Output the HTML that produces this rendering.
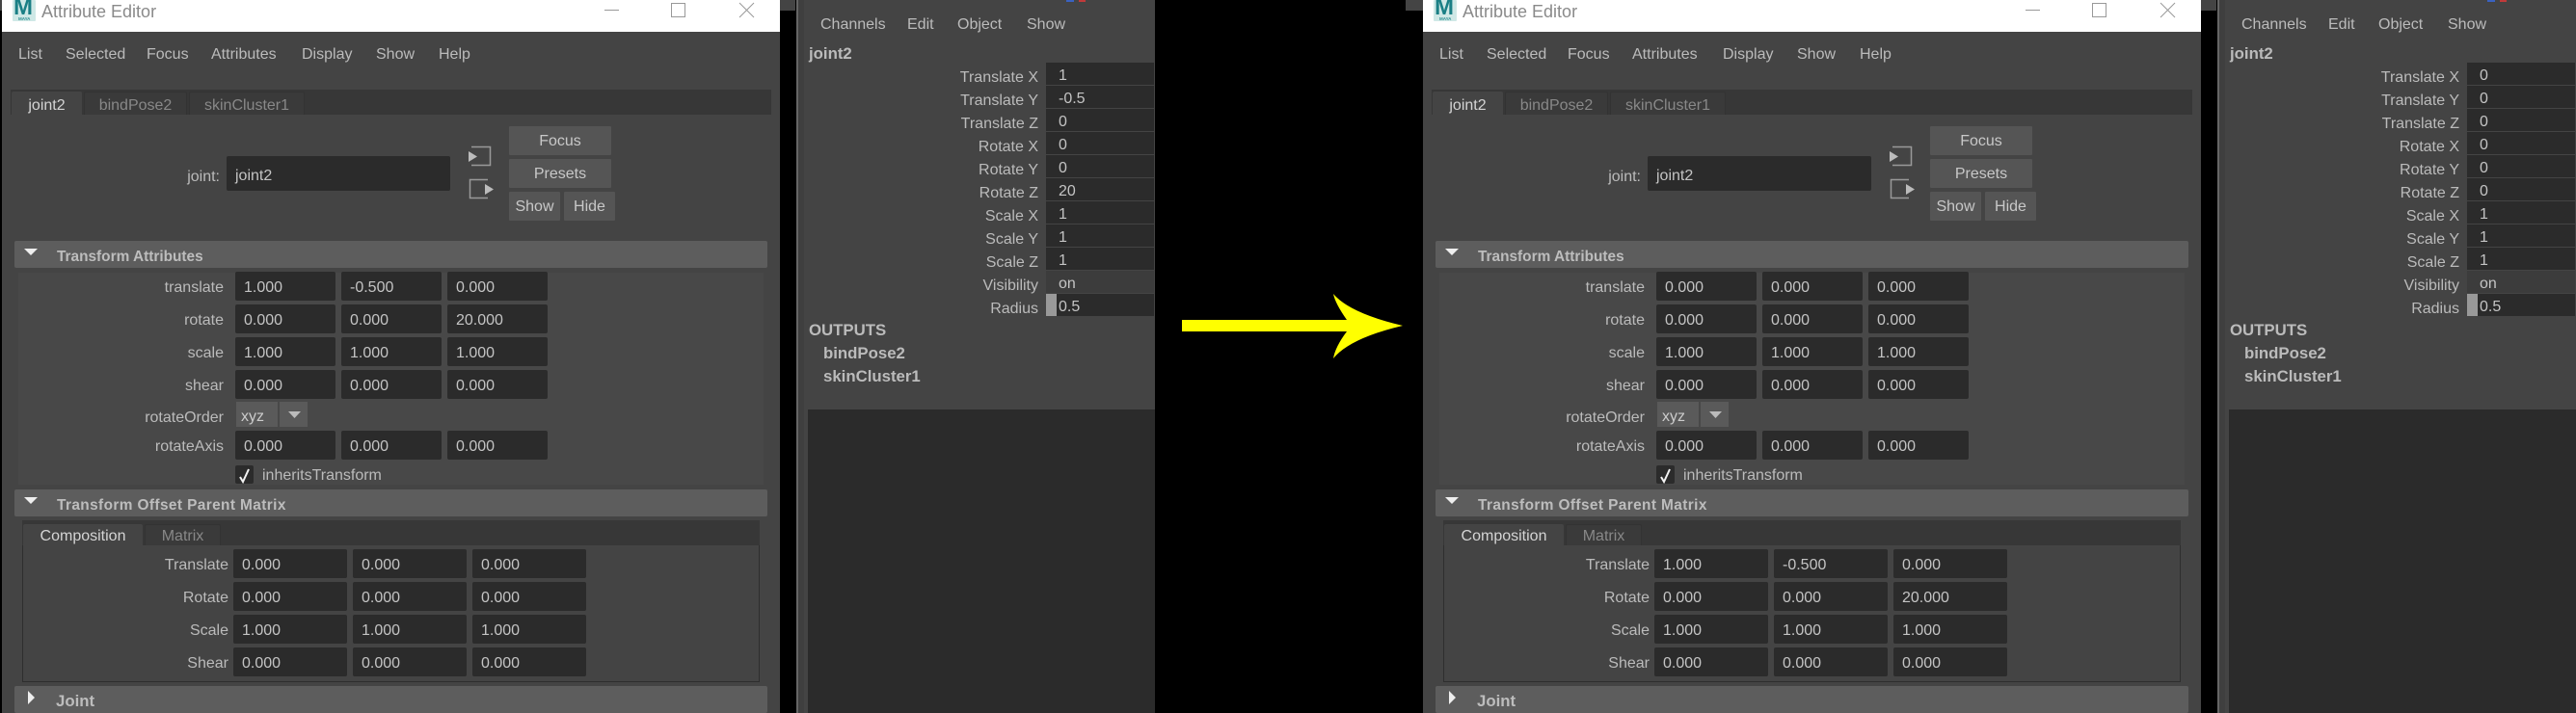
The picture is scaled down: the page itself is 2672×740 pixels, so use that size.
<!DOCTYPE html>
<html><head><meta charset="utf-8"><title>Attribute Editor</title>
<style>
html,body{margin:0;padding:0;background:#000;width:2672px;height:740px;overflow:hidden}
body{position:relative;font-family:"Liberation Sans",sans-serif;font-size:16px;color:#bbb}
div,span{box-sizing:border-box}
.a{position:absolute}
.w{position:absolute;top:0;width:840px;height:740px}
.t{position:absolute;line-height:20px;height:20px;white-space:nowrap;margin-top:2px}
.r{transform:translateX(-100%)}
.b{font-weight:bold;font-size:16.8px}
.sec{position:absolute;left:15px;width:781px;height:28px;background:#5d5d5d;border-radius:2px}
.sec .t{left:44px;top:6px;font-weight:bold;font-size:15.4px;color:#bdbdbd;margin-top:1px}
.f{position:absolute;height:30px;background:#2b2b2b;border-radius:2px;line-height:33px;padding-left:9px;color:#c4c4c4;width:104px}
.c1{left:244px}.c2{left:354px}.c3{left:464px}
.d1{left:242px;width:118px}.d2{left:366px;width:118px}.d3{left:490px;width:118px}
.btn{position:absolute;background:#555;height:30px;line-height:32px;text-align:center;color:#c8c8c8;border-radius:1px}
.tab{position:absolute;background:#3a3a3a;border:1px solid #333;border-bottom:0;border-radius:2px 2px 0 0;color:#888;text-align:center}
.on{background:#444;border-color:#444;color:#d4d4d4}
.cf{position:absolute;left:1085px;width:112px;height:23px;background:#2b2b2b;line-height:27px;padding-left:13px;color:#c4c4c4}
.ci{left:2559px;width:112px}
.logo{position:absolute;left:13px;top:0;width:24px;height:22px;background:#cfe8e6;border-radius:1px;overflow:hidden}
.logo .m{position:absolute;left:1px;top:-3px;font-size:24px;font-weight:bold;line-height:21px;color:#1a7f85}
.logo .y{position:absolute;left:6px;top:17px;font-size:4.5px;font-weight:bold;line-height:5px;color:#2f8f93}
</style></head><body>

<!-- backdrop strips -->
<div class="a" style="left:0;top:0;width:2px;height:11px;background:#444"></div>
<div class="a" style="left:809px;top:0;width:16px;height:11px;background:#444"></div>
<div class="a" style="left:1458px;top:0;width:18px;height:11px;background:#444"></div>
<div class="a" style="left:2283px;top:0;width:16px;height:11px;background:#444"></div>

<!-- LEFT ATTRIBUTE EDITOR -->
<div class="w" style="left:0">
<div class="a" style="left:2px;top:33px;width:807px;height:707px;background:#444"></div>
<div class="a" style="left:2px;top:0;width:807px;height:33px;background:#fff"></div>
<div class="logo"><span class="m">M</span><span class="y">MAYA</span></div>
<div class="t" style="left:43px;top:0;font-size:18px;color:#8a8a8a">Attribute Editor</div>
<svg class="a" style="left:620px;top:0" width="170" height="24" fill="none" stroke="#999" stroke-width="1"><path d="M7 10.5H22"/><rect x="76.5" y="3.5" width="14" height="14"/><path d="M147 3L162 18M162 3L147 18"/></svg>

<div class="t" style="left:19px;top:45px">List</div>
<div class="t" style="left:68px;top:45px">Selected</div>
<div class="t" style="left:152px;top:45px">Focus</div>
<div class="t" style="left:219px;top:45px">Attributes</div>
<div class="t" style="left:313px;top:45px">Display</div>
<div class="t" style="left:390px;top:45px">Show</div>
<div class="t" style="left:455px;top:45px">Help</div>

<div class="a" style="left:11px;top:93px;width:789px;height:26px;background:#373737"></div>
<div class="tab on" style="left:12px;top:95px;width:73px;height:24px;line-height:27px">joint2</div>
<div class="tab" style="left:87px;top:95px;width:107px;height:24px;line-height:27px">bindPose2</div>
<div class="tab" style="left:196px;top:95px;width:120px;height:24px;line-height:27px">skinCluster1</div>

<div class="t r" style="left:228px;top:172px">joint:</div>
<div class="f" style="left:235px;top:162px;width:232px;height:36px;line-height:41px;padding-left:9px">joint2</div>
<svg class="a" style="left:484px;top:150px" width="30" height="60"><path d="M5 2.5H24.500V21.500H5" fill="none" stroke="#999" stroke-width="1.500"/><path d="M2 7L11 12.500L2 18Z" fill="#bbb"/><path d="M22 36.500H3.500V55.500H22" fill="none" stroke="#999" stroke-width="1.500"/><path d="M19 41L28 46.500L19 52Z" fill="#bbb"/></svg>
<div class="btn" style="left:528px;top:131px;width:106px">Focus</div>
<div class="btn" style="left:528px;top:165px;width:106px">Presets</div>
<div class="btn" style="left:528px;top:199px;width:53px">Show</div>
<div class="btn" style="left:585px;top:199px;width:53px">Hide</div>

<div class="a" style="left:19px;top:283px;width:773px;height:220px;background:#484848"></div>
<div class="sec" style="top:250px"><svg class="a" style="left:10px;top:8px" width="16" height="8"><path d="M0 0H14L7 7Z" fill="#eee"/></svg><div class="t">Transform Attributes</div></div>

<div class="t r" style="left:232px;top:287px">translate</div>
<div class="f c1" style="top:282px">1.000</div><div class="f c2" style="top:282px">-0.500</div><div class="f c3" style="top:282px">0.000</div>
<div class="t r" style="left:232px;top:321px">rotate</div>
<div class="f c1" style="top:316px">0.000</div><div class="f c2" style="top:316px">0.000</div><div class="f c3" style="top:316px">20.000</div>
<div class="t r" style="left:232px;top:355px">scale</div>
<div class="f c1" style="top:350px">1.000</div><div class="f c2" style="top:350px">1.000</div><div class="f c3" style="top:350px">1.000</div>
<div class="t r" style="left:232px;top:389px">shear</div>
<div class="f c1" style="top:384px">0.000</div><div class="f c2" style="top:384px">0.000</div><div class="f c3" style="top:384px">0.000</div>
<div class="t r" style="left:232px;top:422px">rotateOrder</div>
<div class="a" style="left:245px;top:417px;width:43px;height:26px;background:#5a5a5a;line-height:32px;padding-left:5px;color:#ccc">xyz</div>
<div class="a" style="left:290px;top:417px;width:29px;height:26px;background:#5a5a5a"></div>
<svg class="a" style="left:298px;top:426px" width="16" height="9"><path d="M1 1H14L7.500 8Z" fill="#bbb"/></svg>
<div class="t r" style="left:232px;top:452px">rotateAxis</div>
<div class="f c1" style="top:447px">0.000</div><div class="f c2" style="top:447px">0.000</div><div class="f c3" style="top:447px">0.000</div>
<div class="a" style="left:244px;top:483px;width:19px;height:19px;background:#2b2b2b;border-radius:2px"></div>
<svg class="a" style="left:244px;top:483px" width="19" height="19"><path d="M5 12L8 17L14 4" fill="none" stroke="#f2f2f2" stroke-width="2"/></svg>
<div class="t" style="left:272px;top:482px">inheritsTransform</div>

<div class="sec" style="top:508px"><svg class="a" style="left:10px;top:8px" width="16" height="8"><path d="M0 0H14L7 7Z" fill="#eee"/></svg><div class="t" style="letter-spacing:.4px">Transform Offset Parent Matrix</div></div>

<div class="a" style="left:23px;top:540px;width:765px;height:168px;border:1px solid #2e2e2e;border-top:0"></div>
<div class="a" style="left:23px;top:540px;width:765px;height:26px;background:#373737"></div>
<div class="tab on" style="left:24px;top:544px;width:124px;height:22px;line-height:24px">Composition</div>
<div class="tab" style="left:150px;top:544px;width:79px;height:22px;line-height:24px">Matrix</div>

<div class="t r" style="left:237px;top:575px">Translate</div>
<div class="f d1" style="top:570px">0.000</div><div class="f d2" style="top:570px">0.000</div><div class="f d3" style="top:570px">0.000</div>
<div class="t r" style="left:237px;top:609px">Rotate</div>
<div class="f d1" style="top:604px">0.000</div><div class="f d2" style="top:604px">0.000</div><div class="f d3" style="top:604px">0.000</div>
<div class="t r" style="left:237px;top:643px">Scale</div>
<div class="f d1" style="top:638px">1.000</div><div class="f d2" style="top:638px">1.000</div><div class="f d3" style="top:638px">1.000</div>
<div class="t r" style="left:237px;top:677px">Shear</div>
<div class="f d1" style="top:672px">0.000</div><div class="f d2" style="top:672px">0.000</div><div class="f d3" style="top:672px">0.000</div>

<div class="sec" style="top:712px"><svg class="a" style="left:13px;top:5px" width="10" height="15"><path d="M1 0L8 7L1 14Z" fill="#eee"/></svg><div class="t" style="left:43px;top:5px;font-size:16.8px">Joint</div></div>
</div>

<!-- LEFT CHANNEL BOX -->
<div class="a" style="left:826px;top:0;width:2px;height:740px;background:#666"></div>
<div class="a" style="left:828px;top:0;width:370px;height:740px;background:#444"></div>
<div class="a" style="left:828px;top:0;width:6px;height:740px;background:#3f3f3f"></div>
<div class="a" style="left:1106px;top:0;width:8px;height:2px;background:#3a62c0"></div>
<div class="a" style="left:1119px;top:0;width:7px;height:2px;background:#c03a3a"></div>
<div class="t" style="left:851px;top:14px">Channels</div>
<div class="t" style="left:941px;top:14px">Edit</div>
<div class="t" style="left:993px;top:14px">Object</div>
<div class="t" style="left:1065px;top:14px">Show</div>
<div class="t b" style="left:839px;top:44px">joint2</div>
<div class="t r" style="left:1077px;top:69px">Translate X</div><div class="cf" style="top:65px">1</div>
<div class="t r" style="left:1077px;top:93px">Translate Y</div><div class="cf" style="top:89px">-0.5</div>
<div class="t r" style="left:1077px;top:117px">Translate Z</div><div class="cf" style="top:113px">0</div>
<div class="t r" style="left:1077px;top:141px">Rotate X</div><div class="cf" style="top:137px">0</div>
<div class="t r" style="left:1077px;top:165px">Rotate Y</div><div class="cf" style="top:161px">0</div>
<div class="t r" style="left:1077px;top:189px">Rotate Z</div><div class="cf" style="top:185px">20</div>
<div class="t r" style="left:1077px;top:213px">Scale X</div><div class="cf" style="top:209px">1</div>
<div class="t r" style="left:1077px;top:237px">Scale Y</div><div class="cf" style="top:233px">1</div>
<div class="t r" style="left:1077px;top:261px">Scale Z</div><div class="cf" style="top:257px">1</div>
<div class="t r" style="left:1077px;top:285px">Visibility</div><div class="cf" style="top:281px;background:#3c3c3c">on</div>
<div class="t r" style="left:1077px;top:309px">Radius</div><div class="cf" style="top:305px">0.5</div>
<div class="a" style="left:1085px;top:305px;width:11px;height:23px;background:#999"></div>
<div class="t b" style="left:839px;top:331px">OUTPUTS</div>
<div class="t b" style="left:854px;top:355px">bindPose2</div>
<div class="t b" style="left:854px;top:379px">skinCluster1</div>
<div class="a" style="left:838px;top:425px;width:360px;height:315px;background:#2b2b2b"></div>

<!-- ARROW -->
<svg class="a" style="left:1220px;top:300px" width="240" height="80"><path d="M6 32H177Q165 15 163 5Q180 25 235 38Q180 51 163 72Q165 60 177 44H6Z" fill="#ffff00"/></svg>

<!-- RIGHT ATTRIBUTE EDITOR -->
<div class="w" style="left:1474px">
<div class="a" style="left:2px;top:33px;width:807px;height:707px;background:#444"></div>
<div class="a" style="left:2px;top:0;width:807px;height:33px;background:#fff"></div>
<div class="logo"><span class="m">M</span><span class="y">MAYA</span></div>
<div class="t" style="left:43px;top:0;font-size:18px;color:#8a8a8a">Attribute Editor</div>
<svg class="a" style="left:620px;top:0" width="170" height="24" fill="none" stroke="#999" stroke-width="1"><path d="M7 10.5H22"/><rect x="76.5" y="3.5" width="14" height="14"/><path d="M147 3L162 18M162 3L147 18"/></svg>

<div class="t" style="left:19px;top:45px">List</div>
<div class="t" style="left:68px;top:45px">Selected</div>
<div class="t" style="left:152px;top:45px">Focus</div>
<div class="t" style="left:219px;top:45px">Attributes</div>
<div class="t" style="left:313px;top:45px">Display</div>
<div class="t" style="left:390px;top:45px">Show</div>
<div class="t" style="left:455px;top:45px">Help</div>

<div class="a" style="left:11px;top:93px;width:789px;height:26px;background:#373737"></div>
<div class="tab on" style="left:12px;top:95px;width:73px;height:24px;line-height:27px">joint2</div>
<div class="tab" style="left:87px;top:95px;width:107px;height:24px;line-height:27px">bindPose2</div>
<div class="tab" style="left:196px;top:95px;width:120px;height:24px;line-height:27px">skinCluster1</div>

<div class="t r" style="left:228px;top:172px">joint:</div>
<div class="f" style="left:235px;top:162px;width:232px;height:36px;line-height:41px;padding-left:9px">joint2</div>
<svg class="a" style="left:484px;top:150px" width="30" height="60"><path d="M5 2.5H24.500V21.500H5" fill="none" stroke="#999" stroke-width="1.500"/><path d="M2 7L11 12.500L2 18Z" fill="#bbb"/><path d="M22 36.500H3.500V55.500H22" fill="none" stroke="#999" stroke-width="1.500"/><path d="M19 41L28 46.500L19 52Z" fill="#bbb"/></svg>
<div class="btn" style="left:528px;top:131px;width:106px">Focus</div>
<div class="btn" style="left:528px;top:165px;width:106px">Presets</div>
<div class="btn" style="left:528px;top:199px;width:53px">Show</div>
<div class="btn" style="left:585px;top:199px;width:53px">Hide</div>

<div class="a" style="left:19px;top:283px;width:773px;height:220px;background:#484848"></div>
<div class="sec" style="top:250px"><svg class="a" style="left:10px;top:8px" width="16" height="8"><path d="M0 0H14L7 7Z" fill="#eee"/></svg><div class="t">Transform Attributes</div></div>

<div class="t r" style="left:232px;top:287px">translate</div>
<div class="f c1" style="top:282px">0.000</div><div class="f c2" style="top:282px">0.000</div><div class="f c3" style="top:282px">0.000</div>
<div class="t r" style="left:232px;top:321px">rotate</div>
<div class="f c1" style="top:316px">0.000</div><div class="f c2" style="top:316px">0.000</div><div class="f c3" style="top:316px">0.000</div>
<div class="t r" style="left:232px;top:355px">scale</div>
<div class="f c1" style="top:350px">1.000</div><div class="f c2" style="top:350px">1.000</div><div class="f c3" style="top:350px">1.000</div>
<div class="t r" style="left:232px;top:389px">shear</div>
<div class="f c1" style="top:384px">0.000</div><div class="f c2" style="top:384px">0.000</div><div class="f c3" style="top:384px">0.000</div>
<div class="t r" style="left:232px;top:422px">rotateOrder</div>
<div class="a" style="left:245px;top:417px;width:43px;height:26px;background:#5a5a5a;line-height:32px;padding-left:5px;color:#ccc">xyz</div>
<div class="a" style="left:290px;top:417px;width:29px;height:26px;background:#5a5a5a"></div>
<svg class="a" style="left:298px;top:426px" width="16" height="9"><path d="M1 1H14L7.500 8Z" fill="#bbb"/></svg>
<div class="t r" style="left:232px;top:452px">rotateAxis</div>
<div class="f c1" style="top:447px">0.000</div><div class="f c2" style="top:447px">0.000</div><div class="f c3" style="top:447px">0.000</div>
<div class="a" style="left:244px;top:483px;width:19px;height:19px;background:#2b2b2b;border-radius:2px"></div>
<svg class="a" style="left:244px;top:483px" width="19" height="19"><path d="M5 12L8 17L14 4" fill="none" stroke="#f2f2f2" stroke-width="2"/></svg>
<div class="t" style="left:272px;top:482px">inheritsTransform</div>

<div class="sec" style="top:508px"><svg class="a" style="left:10px;top:8px" width="16" height="8"><path d="M0 0H14L7 7Z" fill="#eee"/></svg><div class="t" style="letter-spacing:.4px">Transform Offset Parent Matrix</div></div>

<div class="a" style="left:23px;top:540px;width:765px;height:168px;border:1px solid #2e2e2e;border-top:0"></div>
<div class="a" style="left:23px;top:540px;width:765px;height:26px;background:#373737"></div>
<div class="tab on" style="left:24px;top:544px;width:124px;height:22px;line-height:24px">Composition</div>
<div class="tab" style="left:150px;top:544px;width:79px;height:22px;line-height:24px">Matrix</div>

<div class="t r" style="left:237px;top:575px">Translate</div>
<div class="f d1" style="top:570px">1.000</div><div class="f d2" style="top:570px">-0.500</div><div class="f d3" style="top:570px">0.000</div>
<div class="t r" style="left:237px;top:609px">Rotate</div>
<div class="f d1" style="top:604px">0.000</div><div class="f d2" style="top:604px">0.000</div><div class="f d3" style="top:604px">20.000</div>
<div class="t r" style="left:237px;top:643px">Scale</div>
<div class="f d1" style="top:638px">1.000</div><div class="f d2" style="top:638px">1.000</div><div class="f d3" style="top:638px">1.000</div>
<div class="t r" style="left:237px;top:677px">Shear</div>
<div class="f d1" style="top:672px">0.000</div><div class="f d2" style="top:672px">0.000</div><div class="f d3" style="top:672px">0.000</div>

<div class="sec" style="top:712px"><svg class="a" style="left:13px;top:5px" width="10" height="15"><path d="M1 0L8 7L1 14Z" fill="#eee"/></svg><div class="t" style="left:43px;top:5px;font-size:16.8px">Joint</div></div>
</div>

<!-- RIGHT CHANNEL BOX -->
<div class="a" style="left:2300px;top:0;width:2px;height:740px;background:#666"></div>
<div class="a" style="left:2302px;top:0;width:370px;height:740px;background:#444"></div>
<div class="a" style="left:2302px;top:0;width:6px;height:740px;background:#3f3f3f"></div>
<div class="a" style="left:2580px;top:0;width:8px;height:2px;background:#3a62c0"></div>
<div class="a" style="left:2593px;top:0;width:7px;height:2px;background:#c03a3a"></div>
<div class="t" style="left:2325px;top:14px">Channels</div>
<div class="t" style="left:2415px;top:14px">Edit</div>
<div class="t" style="left:2467px;top:14px">Object</div>
<div class="t" style="left:2539px;top:14px">Show</div>
<div class="t b" style="left:2313px;top:44px">joint2</div>
<div class="t r" style="left:2551px;top:69px">Translate X</div><div class="cf ci" style="top:65px">0</div>
<div class="t r" style="left:2551px;top:93px">Translate Y</div><div class="cf ci" style="top:89px">0</div>
<div class="t r" style="left:2551px;top:117px">Translate Z</div><div class="cf ci" style="top:113px">0</div>
<div class="t r" style="left:2551px;top:141px">Rotate X</div><div class="cf ci" style="top:137px">0</div>
<div class="t r" style="left:2551px;top:165px">Rotate Y</div><div class="cf ci" style="top:161px">0</div>
<div class="t r" style="left:2551px;top:189px">Rotate Z</div><div class="cf ci" style="top:185px">0</div>
<div class="t r" style="left:2551px;top:213px">Scale X</div><div class="cf ci" style="top:209px">1</div>
<div class="t r" style="left:2551px;top:237px">Scale Y</div><div class="cf ci" style="top:233px">1</div>
<div class="t r" style="left:2551px;top:261px">Scale Z</div><div class="cf ci" style="top:257px">1</div>
<div class="t r" style="left:2551px;top:285px">Visibility</div><div class="cf ci" style="top:281px;background:#3c3c3c">on</div>
<div class="t r" style="left:2551px;top:309px">Radius</div><div class="cf ci" style="top:305px">0.5</div>
<div class="a" style="left:2559px;top:305px;width:11px;height:23px;background:#999"></div>
<div class="t b" style="left:2313px;top:331px">OUTPUTS</div>
<div class="t b" style="left:2328px;top:355px">bindPose2</div>
<div class="t b" style="left:2328px;top:379px">skinCluster1</div>
<div class="a" style="left:2312px;top:425px;width:360px;height:315px;background:#2b2b2b"></div>
</body></html>
